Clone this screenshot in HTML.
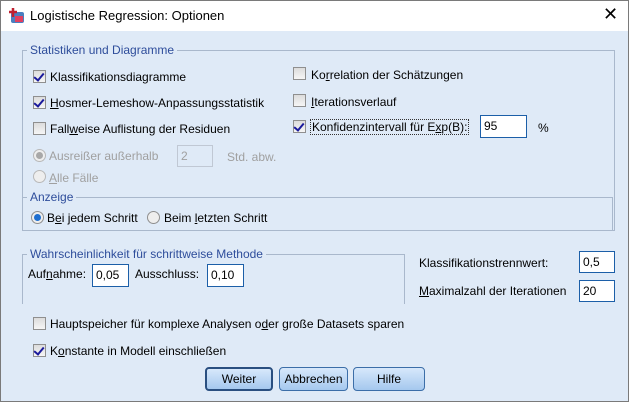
<!DOCTYPE html>
<html><head><meta charset="utf-8"><style>
*{box-sizing:border-box;margin:0;padding:0}
body{width:629px;height:402px;overflow:hidden;background:#dfeaf7;font-family:"Liberation Sans",sans-serif;font-size:12px;color:#000;position:relative}
.a{position:absolute;white-space:nowrap}
.win{position:absolute;left:0;top:0;width:629px;height:402px;border:1px solid #7a7a7a}
.title{position:absolute;left:1px;top:1px;width:627px;height:30px;background:#fff}
.grp{position:absolute;border:1px solid #a9b8cc}
.lg{position:absolute;background:#dfeaf7;color:#2e4d9b;padding:0 3px;font-size:12px;line-height:14px}
.cb{position:absolute;width:13px;height:13px;border:1px solid #8f8f8f;background:linear-gradient(#dcdcdc,#f6f6f6)}
.cb.on::after{content:"";position:absolute;left:2px;top:0px;width:4px;height:8px;border:solid #1a1a9c;border-width:0 2px 2px 0;transform:rotate(40deg)}
.rb{position:absolute;width:13px;height:13px;border:1px solid #8f8f8f;border-radius:50%;background:#eee}
.rb.on::after{content:"";position:absolute;left:2px;top:2px;width:7px;height:7px;border-radius:50%;background:#1f6fd0}
.rb.dis{border-color:#b8b8b8}
.rb.dis.on::after{background:#a8a8a8}
.in{position:absolute;background:#fff;border:1px solid #1c5fa8;padding:3px 0 0 3px;font-size:12px}
.btn{position:absolute;height:24px;border:1px solid #3c6ea8;border-radius:4px;background:linear-gradient(#d7e8fb,#a5c8ee);text-align:center;line-height:22px}
.g{color:#a0a0a0}
u{text-decoration:underline}
</style></head><body>
<div class="win"></div>
<div class="title"></div>
<svg class="a" style="left:8px;top:7px" width="17" height="17"><rect x="3" y="5" width="13" height="11" rx="2" fill="#4a7fc0"/><rect x="7" y="9" width="8" height="6" fill="#e04060"/><path d="M5 1v9M1 5h8" stroke="#c02030" stroke-width="2.5"/></svg>
<div class="a" style="left:30px;top:8px;font-size:13px">Logistische Regression: Optionen</div>
<div class="a" style="left:603px;top:4px;font-size:18px">✕</div>

<div class="grp" style="left:22px;top:50px;width:593px;height:181px"></div>
<div class="lg" style="left:27px;top:43px">Statistiken und Diagramme</div>
<div class="cb on" style="left:33px;top:70px"></div><div class="a" style="left:50px;top:70px">Klassifikationsdiagramme</div>
<div class="cb on" style="left:33px;top:96px"></div><div class="a" style="left:50px;top:96px"><u>H</u>osmer-Lemeshow-Anpassungsstatistik</div>
<div class="cb" style="left:33px;top:122px"></div><div class="a" style="left:50px;top:122px">Fall<u>w</u>eise Auflistung der Residuen</div>
<div class="rb dis on" style="left:33px;top:149px"></div><div class="a g" style="left:49px;top:149px">Ausreißer außerhalb</div>
<div class="a" style="left:177px;top:145px;width:36px;height:22px;border:1px solid #c0c8d4"></div><div class="a g" style="left:181px;top:149px">2</div>
<div class="a g" style="left:227px;top:150px">Std. abw.</div>
<div class="rb dis" style="left:33px;top:170px"></div><div class="a g" style="left:49px;top:171px"><u>A</u>lle Fälle</div>

<div class="cb" style="left:293px;top:67px"></div><div class="a" style="left:311px;top:68px">Ko<u>r</u>relation der Schätzungen</div>
<div class="cb" style="left:293px;top:94px"></div><div class="a" style="left:311px;top:95px"><u>I</u>terationsverlauf</div>
<div class="cb on" style="left:293px;top:120px"></div><div class="a" style="left:310px;top:119px;border:1px dotted #333;padding:0 1px">Konfidenzintervall für E<u>x</u>p(B):</div>
<div class="in" style="left:480px;top:115px;width:47px;height:23px">95</div>
<div class="a" style="left:538px;top:121px">%</div>

<div class="grp" style="left:22px;top:197px;width:591px;height:34px"></div>
<div class="lg" style="left:27px;top:190px">Anzeige</div>
<div class="rb on" style="left:31px;top:211px"></div><div class="a" style="left:47px;top:211px">B<u>e</u>i jedem Schritt</div>
<div class="rb" style="left:147px;top:211px"></div><div class="a" style="left:164px;top:211px">Beim <u>l</u>etzten Schritt</div>

<div class="grp" style="left:22px;top:254px;width:383px;height:50px;border-bottom:none"></div>
<div class="lg" style="left:27px;top:247px">Wahrscheinlichkeit für schrittweise Methode</div>
<div class="a" style="left:28px;top:267px">Auf<u>n</u>ahme:</div>
<div class="in" style="left:92px;top:264px;width:37px;height:23px">0,05</div>
<div class="a" style="left:135px;top:267px">Ausschluss:</div>
<div class="in" style="left:207px;top:264px;width:37px;height:23px">0,10</div>

<div class="a" style="left:419px;top:256px">Klassifikationstrennwert:</div>
<div class="in" style="left:579px;top:251px;width:36px;height:22px">0,5</div>
<div class="a" style="left:419px;top:284px"><u>M</u>aximalzahl der Iterationen</div>
<div class="in" style="left:579px;top:280px;width:36px;height:22px">20</div>

<div class="cb" style="left:33px;top:317px"></div><div class="a" style="left:50px;top:317px">Hauptspeicher für komplexe Analysen o<u>d</u>er große Datasets sparen</div>
<div class="cb on" style="left:33px;top:344px"></div><div class="a" style="left:50px;top:344px">K<u>o</u>nstante in Modell einschließen</div>

<div class="btn" style="left:205px;top:367px;width:68px;border-color:#2a4f80;border-width:2px;line-height:20px">Weiter</div>
<div class="btn" style="left:279px;top:367px;width:69px">Abbrechen</div>
<div class="btn" style="left:353px;top:367px;width:72px">Hilfe</div>
</body></html>
